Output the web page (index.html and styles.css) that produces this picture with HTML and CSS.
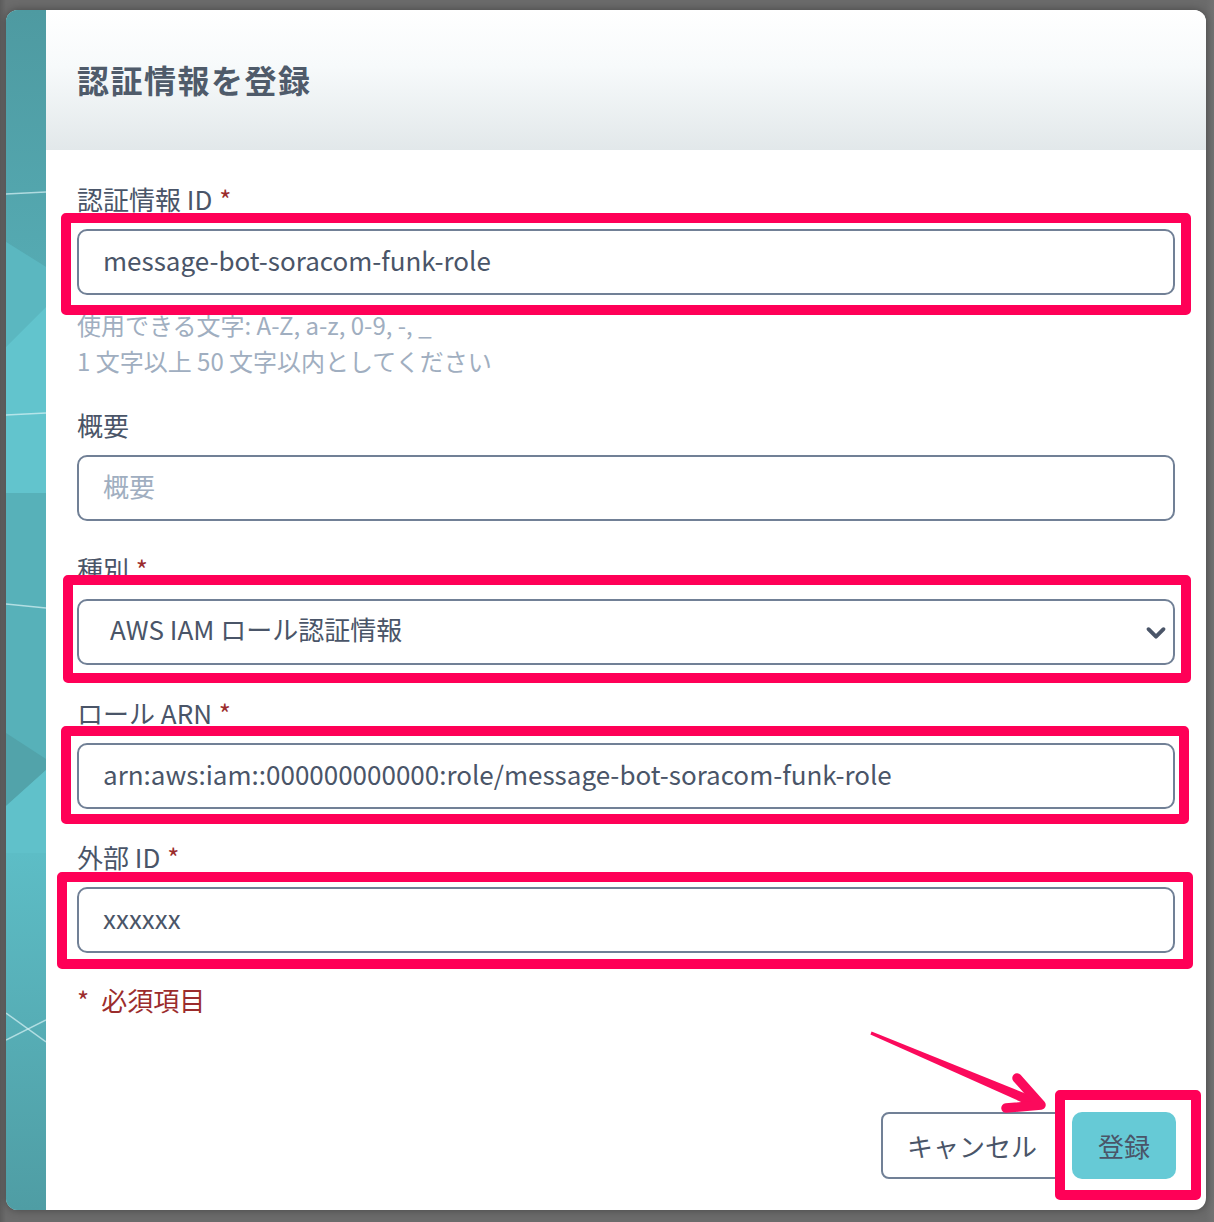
FILE: index.html
```html
<!DOCTYPE html>
<html lang="ja">
<head>
<meta charset="utf-8">
<title>認証情報を登録</title>
<link rel="stylesheet" href="styles.css">
</head>
<body>
<div class="backdrop">
  <div class="modal">
    <div class="modal-side">
      <svg class="side-art" viewBox="0 0 40 1200" preserveAspectRatio="none" aria-hidden="true">
        <defs>
          <linearGradient id="gBottom" x1="0" y1="0" x2="0" y2="1">
            <stop offset="0" stop-color="#5dbdc6"/>
            <stop offset="1" stop-color="#4f9da4"/>
          </linearGradient>
          <linearGradient id="gTop" x1="0" y1="0" x2="0" y2="1">
            <stop offset="0" stop-color="#4e9aa1"/>
            <stop offset="1" stop-color="#55aab2"/>
          </linearGradient>
        </defs>
        <polygon points="0,0 40,0 40,257 0,232" fill="url(#gTop)"/>
        <polygon points="0,232 40,257 40,297 0,337" fill="#5bb7c0"/>
        <polygon points="0,337 40,297 40,483 0,483" fill="#62c4cd"/>
        <polygon points="0,483 40,483 40,749 0,723" fill="#57b1b9"/>
        <polygon points="0,723 40,749 40,760 0,796" fill="#52a3aa"/>
        <polygon points="0,796 40,760 40,843 0,843" fill="#60c1ca"/>
        <polygon points="0,843 40,843 40,1200 0,1200" fill="url(#gBottom)"/>
        <g stroke="#d8f2f5" stroke-opacity="0.7" stroke-width="1.5" fill="none">
          <line x1="0" y1="184" x2="40" y2="182"/>
          <line x1="0" y1="405" x2="40" y2="403"/>
          <line x1="0" y1="594" x2="40" y2="598"/>
          <line x1="0" y1="1003" x2="40" y2="1032"/>
          <line x1="0" y1="1030" x2="40" y2="1010"/>
        </g>
      </svg>
    </div>
    <div class="modal-main">
      <header class="modal-header">
        <h1 class="modal-title">認証情報を登録</h1>
      </header>
      <div class="modal-body">
        <div class="field">
          <label class="field-label">認証情報 ID <span class="req">*</span></label>
          <input class="text-input" type="text" value="message-bot-soracom-funk-role">
          <div class="help">
            <p>使用できる文字: A-Z, a-z, 0-9, -, _</p>
            <p>1 文字以上 50 文字以内としてください</p>
          </div>
        </div>
        <div class="field">
          <label class="field-label">概要</label>
          <input class="text-input" type="text" placeholder="概要">
        </div>
        <div class="field">
          <label class="field-label">種別 <span class="req">*</span></label>
          <div class="select">
            <span class="select-value">AWS IAM ロール認証情報</span>
            <svg class="chevron" viewBox="0 0 20 14" aria-hidden="true">
              <polyline points="3,3 10,10 17,3" fill="none" stroke="#4a5568" stroke-width="3.6" stroke-linecap="round" stroke-linejoin="round"/>
            </svg>
          </div>
        </div>
        <div class="field">
          <label class="field-label">ロール ARN <span class="req">*</span></label>
          <input class="text-input" type="text" value="arn:aws:iam::000000000000:role/message-bot-soracom-funk-role">
        </div>
        <div class="field">
          <label class="field-label">外部 ID <span class="req">*</span></label>
          <input class="text-input" type="text" value="xxxxxx">
        </div>
        <p class="req-note"><span class="req-note-star">*</span>必須項目</p>
      </div>
      <footer class="modal-footer">
        <button class="btn btn-cancel" type="button">キャンセル</button>
        <button class="btn btn-primary" type="button">登録</button>
      </footer>
    </div>
  </div>

  <div class="mark mark-1"></div>
  <div class="mark mark-2"></div>
  <div class="mark mark-3"></div>
  <div class="mark mark-4"></div>
  <div class="mark mark-5"></div>
  <svg class="arrow" viewBox="0 0 200 95" aria-hidden="true">
    <polygon points="11.6,6.4 180.2,74.5 175.8,83.5 10.4,9.6" fill="#fb0a5c"/>
    <polyline points="157,53 181,80 146,83" fill="none" stroke="#fb0a5c" stroke-width="9.5" stroke-linecap="round" stroke-linejoin="round"/>
  </svg>
</div>
</body>
</html>
```

FILE: styles.css
```css
* {
  box-sizing: border-box;
}

html, body {
  margin: 0;
  padding: 0;
}

body {
  width: 1214px;
  height: 1222px;
  overflow: hidden;
  background: #6a6a6a;
  font-family: "Noto Sans CJK JP", "Noto Sans", sans-serif;
  color: #4a5568;
}

.backdrop {
  position: relative;
  width: 1214px;
  height: 1222px;
  padding: 10px 0 0 6px;
  background: linear-gradient(90deg, #5c5c5c 0, #6b6b6b 6px, #6b6b6b 1206px, #727272 1214px);
}

.modal {
  display: flex;
  width: 1200px;
  height: 1200px;
  border-radius: 12px;
  overflow: hidden;
  background: #ffffff;
  box-shadow: 0 0 8px rgba(0, 0, 0, 0.35);
}

.modal-side {
  flex: 0 0 40px;
  background: #57b1b9;
}

.side-art {
  display: block;
  width: 40px;
  height: 1200px;
}

.modal-main {
  flex: 1 1 auto;
  display: flex;
  flex-direction: column;
  min-width: 0;
}

.modal-header {
  height: 140px;
  display: flex;
  align-items: center;
  padding: 0 31px;
  background: linear-gradient(180deg, #ffffff 0%, #f7fafb 40%, #e2e8ea 100%);
}

.modal-title {
  margin: 0 0 2px;
  font-size: 32px;
  font-weight: 700;
  letter-spacing: 1.5px;
  color: #4f5b6a;
  line-height: 40px;
}

.modal-body {
  padding: 33px 31px 0;
}

.field {
  margin-bottom: 32px;
}

.field-label {
  display: block;
  height: 32px;
  font-size: 26px;
  line-height: 32px;
  margin-bottom: 14px;
  color: #4a5568;
}

.req {
  color: #9b2c2c;
  margin-left: 1px;
}

.text-input {
  display: block;
  width: 100%;
  height: 66px;
  margin: 0;
  padding: 0 24px 6px;
  border: 2px solid #718096;
  border-radius: 10px;
  background: #ffffff;
  font-family: inherit;
  font-size: 26px;
  color: #4a5568;
  outline: none;
}

.text-input::placeholder {
  color: #a0aec0;
  opacity: 1;
}

.help {
  margin: 12px 0 -2px;
  font-size: 24px;
  line-height: 36px;
  color: #a0aec0;
}

.help p {
  margin: 0;
}

.select {
  display: flex;
  align-items: center;
  justify-content: space-between;
  height: 66px;
  padding: 0 6px 0 31px;
  border: 2px solid #718096;
  border-radius: 10px;
  background: #ffffff;
  font-size: 26px;
  color: #4a5568;
}

.select-value {
  padding-bottom: 8px;
}

.chevron {
  width: 22px;
  height: 15px;
  margin-top: 2px;
}

.req-note {
  margin: 0;
  height: 30px;
  font-size: 26px;
  line-height: 30px;
  color: #9b2c2c;
}

.req-note-star {
  margin-right: 12px;
}

.modal-footer {
  margin-top: auto;
  display: flex;
  justify-content: flex-end;
  gap: 9px;
  padding: 0 30px 31px;
}

.btn {
  height: 67px;
  border-radius: 10px;
  font-family: inherit;
  font-size: 26px;
  color: #4a5568;
  cursor: pointer;
  padding-bottom: 2px;
}

.btn-cancel {
  padding-left: 24px;
  padding-right: 24px;
  border: 2px solid #718096;
  border-radius: 8px;
  background: #ffffff;
}

.btn-primary {
  padding-left: 26px;
  padding-right: 26px;
  border: none;
  background: #66cad6;
}

.mark {
  position: absolute;
  border: 10px solid #ff0057;
  border-radius: 5px;
}

.mark-1 { left: 61px; top: 213px; width: 1130px; height: 102px; }
.mark-2 { left: 63px; top: 575px; width: 1128px; height: 108px; }
.mark-3 { left: 61px; top: 726px; width: 1128px; height: 98px; }
.mark-4 { left: 57px; top: 872px; width: 1136px; height: 97px; }
.mark-5 { left: 1055px; top: 1090px; width: 146px; height: 110px; }

.arrow {
  position: absolute;
  left: 860px;
  top: 1025px;
  width: 200px;
  height: 95px;
}
```
